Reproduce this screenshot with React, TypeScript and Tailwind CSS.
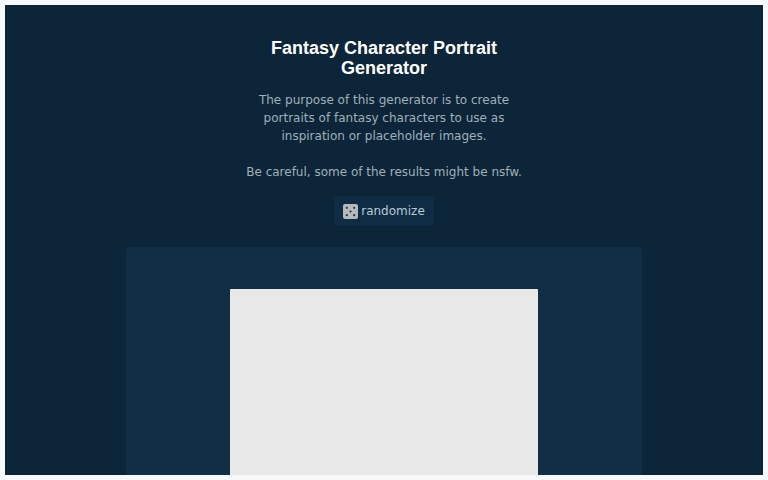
import { ReactNode } from "react";

function DiceIcon() {
  return (
    <svg width="15" height="15" viewBox="0 0 15 15" aria-hidden="true">
      <rect width="15" height="15" rx="2" fill="#b6b9ba" />
      <g fill="#26343f">
        <circle cx="3.8" cy="3.8" r="1.1" />
        <circle cx="11.2" cy="3.8" r="1.1" />
        <circle cx="7.5" cy="7.5" r="1.1" />
        <circle cx="3.8" cy="11.2" r="1.1" />
        <circle cx="11.2" cy="11.2" r="1.1" />
      </g>
    </svg>
  );
}

function Paragraph({ children }: { children: ReactNode }) {
  return <p className="text-xs leading-[18px] text-[#9fb0bb]">{children}</p>;
}

export default function App() {
  return (
    <div className="flex h-screen flex-col bg-[#f8f9fb] p-[5px] font-['DejaVu_Sans',sans-serif]">
      <main className="flex flex-1 flex-col items-center overflow-hidden bg-[#0d2538] pt-[33px]">
        <header className="flex max-w-72 flex-col items-center text-center">
          <h1 className="px-4 font-['Liberation_Sans',sans-serif] text-lg leading-5 font-bold text-white">
            Fantasy Character Portrait Generator
          </h1>
          <div className="mt-[13px] flex flex-col gap-[18px]">
            <Paragraph>
              The purpose of this generator is to create portraits of fantasy characters to use as
              inspiration or placeholder images.
            </Paragraph>
            <Paragraph>Be careful, some of the results might be nsfw.</Paragraph>
          </div>
          <button
            type="button"
            className="mt-[15px] flex h-[30px] items-center gap-[3px] rounded-xs bg-[#0f2c44] px-[9px] text-xs text-[#b7cad6]"
          >
            <DiceIcon />
            randomize
          </button>
        </header>
        <section className="mt-[21px] flex w-[68%] flex-1 flex-col items-center rounded-t bg-[#102e46] pt-[42px]">
          <div className="w-full max-w-[308px] flex-1 rounded-t-[1px] bg-[#e8e8e8]" />
        </section>
      </main>
    </div>
  );
}
